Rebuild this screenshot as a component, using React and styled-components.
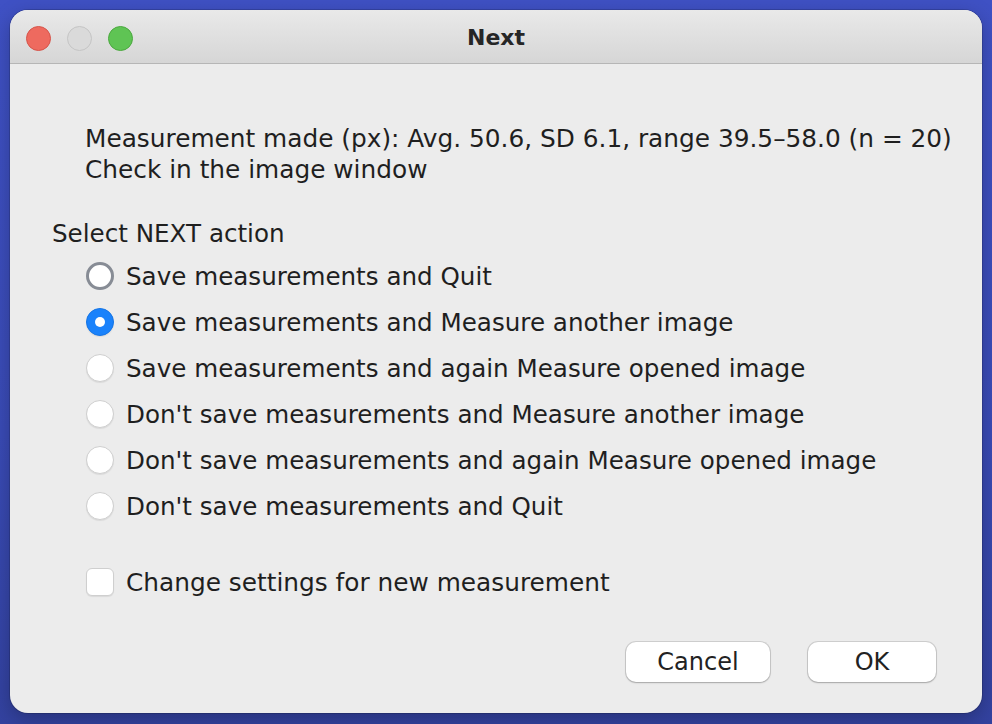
import styled, { createGlobalStyle } from "styled-components";

const GlobalStyle = createGlobalStyle`
  html, body {
    margin: 0;
    padding: 0;
  }
  body {
    width: 992px;
    height: 724px;
    overflow: hidden;
    background: linear-gradient(180deg, #3f51c4 0%, #3a4bb6 60%, #33429f 100%);
    font-family: "DejaVu Sans", "Liberation Sans", sans-serif;
  }
`;

const actions = [
  "Save measurements and Quit",
  "Save measurements and Measure another image",
  "Save measurements and again Measure opened image",
  "Don't save measurements and Measure another image",
  "Don't save measurements and again Measure opened image",
  "Don't save measurements and Quit",
];

export default function App() {
  return (
    <>
      <GlobalStyle />
      <StyledWindow>
        <StyledTitleBar>
          <StyledLights>
            <StyledLight $color="#ee6a5f" $border="#d5544a" />
            <StyledLight $color="#dadada" $border="#c4c4c4" />
            <StyledLight $color="#5fc454" $border="#4ba83f" />
          </StyledLights>
          <StyledTitle>Next</StyledTitle>
        </StyledTitleBar>
        <StyledContent>
          <StyledMessage>
            <p>Measurement made (px): Avg. 50.6, SD 6.1, range 39.5–58.0 (n = 20)</p>
            <p>Check in the image window</p>
          </StyledMessage>
          <StyledHeading>Select NEXT action</StyledHeading>
          <StyledOptions>
            {actions.map((label, i) => (
              <StyledRow key={label}>
                <StyledRadio $checked={i === 1} $focused={i === 0} />
                <span>{label}</span>
              </StyledRow>
            ))}
          </StyledOptions>
          <StyledCheckRow>
            <StyledCheckbox />
            <span>Change settings for new measurement</span>
          </StyledCheckRow>
          <StyledButtons>
            <StyledButton $width={144}>Cancel</StyledButton>
            <StyledButton $width={128}>OK</StyledButton>
          </StyledButtons>
        </StyledContent>
      </StyledWindow>
    </>
  );
}

const StyledWindow = styled.div`
  margin: 10px 0 0 10px;
  width: 972px;
  height: 703px;
  border-radius: 18px;
  overflow: hidden;
  background: #ececec;
  box-shadow: 0 6px 20px rgba(0, 0, 0, 0.25), 0 0 0 1px rgba(0, 0, 0, 0.15);
  display: flex;
  flex-direction: column;
`;

const StyledTitleBar = styled.div`
  position: relative;
  height: 53px;
  flex-shrink: 0;
  background: linear-gradient(180deg, #e9e9e9 0%, #d6d6d6 100%);
  border-bottom: 1px solid #b6b6b6;
  display: flex;
  align-items: center;
  justify-content: center;
`;

const StyledLights = styled.div`
  position: absolute;
  left: 16px;
  top: 16px;
  display: flex;
  gap: 16px;
`;

const StyledLight = styled.span`
  width: 23px;
  height: 23px;
  border-radius: 50%;
  background: ${(p) => p.$color};
  border: 1px solid ${(p) => p.$border};
`;

const StyledTitle = styled.h1`
  margin: 2px 0 0;
  font-size: 22px;
  font-weight: bold;
  color: #262626;
`;

const StyledContent = styled.div`
  flex: 1;
  display: flex;
  flex-direction: column;
  padding: 59px 46px 0 42px;
  font-size: 24.8px;
  color: #1f1f1f;
`;

const StyledMessage = styled.div`
  padding-left: 33px;
  p {
    margin: 0;
    line-height: 31px;
    white-space: nowrap;
  }
`;

const StyledHeading = styled.div`
  margin-top: 33px;
  line-height: 31px;
  font-size: 24.6px;
`;

const StyledOptions = styled.div`
  margin-top: 4px;
  padding-left: 34px;
  display: flex;
  flex-direction: column;
`;

const StyledRow = styled.div`
  height: 46px;
  display: flex;
  align-items: center;
  gap: 12px;
  white-space: nowrap;
  font-size: 24.6px;
`;

const StyledRadio = styled.span`
  box-sizing: border-box;
  width: 28px;
  height: 28px;
  border-radius: 50%;
  flex-shrink: 0;
  position: relative;
  background: ${(p) => (p.$checked ? "#1a82fb" : "#ffffff")};
  border: ${(p) =>
    p.$checked
      ? "1px solid #1575e6"
      : p.$focused
      ? "3px solid #878c95"
      : "1px solid #cfcfcf"};
  box-shadow: ${(p) => (p.$focused ? "none" : "0 1px 1px rgba(0, 0, 0, 0.08)")};

  &::after {
    content: "";
    display: ${(p) => (p.$checked ? "block" : "none")};
    position: absolute;
    left: 50%;
    top: 50%;
    width: 10px;
    height: 10px;
    margin: -5px 0 0 -5px;
    border-radius: 50%;
    background: #ffffff;
  }
`;

const StyledCheckRow = styled(StyledRow)`
  margin-top: 30px;
  padding-left: 34px;
  font-size: 24.8px;
`;

const StyledCheckbox = styled.span`
  box-sizing: border-box;
  width: 28px;
  height: 28px;
  border-radius: 6px;
  background: #ffffff;
  border: 1px solid #cfcfcf;
  box-shadow: 0 1px 1px rgba(0, 0, 0, 0.08);
  flex-shrink: 0;
`;

const StyledButtons = styled.div`
  margin-top: 37px;
  display: flex;
  justify-content: flex-end;
  gap: 38px;
`;

const StyledButton = styled.button`
  width: ${(p) => p.$width}px;
  height: 40px;
  border-radius: 10px;
  border: none;
  background: #ffffff;
  box-shadow: 0 0 0 1px rgba(0, 0, 0, 0.12), 0 1px 2px rgba(0, 0, 0, 0.2);
  font-family: "DejaVu Sans", "Liberation Sans", sans-serif;
  font-size: 24px;
  color: #222222;
  padding: 0;
`;
